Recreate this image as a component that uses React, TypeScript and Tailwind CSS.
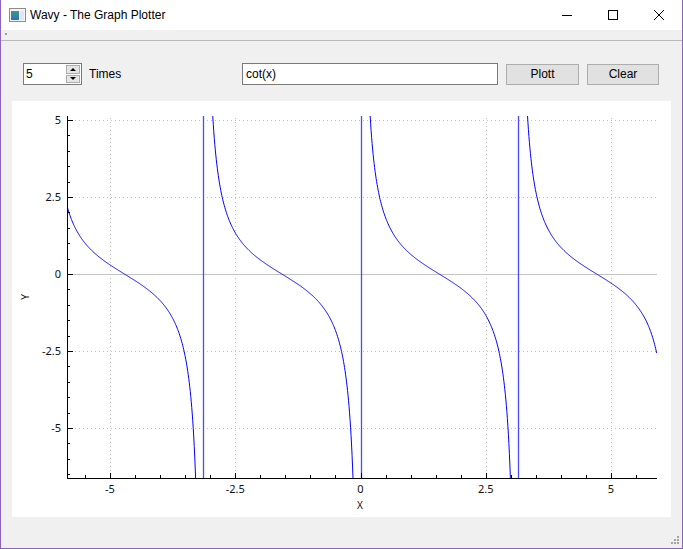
import React from "react";

const FONT = '"Noto Sans", "Liberation Sans", sans-serif';
const UI_FONT = '"Liberation Sans", "Noto Sans", sans-serif';

// plot panel geometry (panel-local px)
const PW = 659;
const PH = 416;
const AX_L = 55;
const AX_R = 645;
const AX_T = 15;
const AX_B = 377;
const X0 = 348.5;
const SX = 50.1;
const Y0 = 173;
const SY = 30.8;

const px = (x: number) => X0 + SX * x;
const py = (y: number) => Y0 - SY * y;

// split cot(x) into branches between the poles
function buildBranches() {
  const xmin = (AX_L - X0) / SX;
  const xmax = (AX_R - X0) / SX;
  const branches: string[][] = [[]];
  let prev: number | null = null;
  for (let x = xmin; x <= xmax + 1e-9; x += 0.01) {
    let v = Math.cos(x) / Math.sin(x);
    if (!isFinite(v)) v = 1e4;
    if (prev !== null && prev < -20 && v > 20) branches.push([]);
    prev = v;
    v = Math.max(-30, Math.min(30, v));
    branches[branches.length - 1].push(`${px(x).toFixed(2)},${py(v).toFixed(2)}`);
  }
  return branches.map((b) => b.join(" "));
}

function Plot() {
  const branches = React.useMemo(buildBranches, []);
  const poles = [-Math.PI, 0, Math.PI];
  const xMajors = [-5, -2.5, 0, 2.5, 5];
  const yMajors = [5, 2.5, 0, -2.5, -5];

  const xMinors: number[] = [];
  for (let v = -5.5; v <= 5.9; v += 0.5) xMinors.push(Math.round(v * 10) / 10);
  const yMinors: number[] = [];
  for (let v = -6.5; v <= 5; v += 0.5) yMinors.push(Math.round(v * 10) / 10);

  return (
    <svg width={PW} height={PH} viewBox={`0 0 ${PW} ${PH}`} className="block">
      <defs>
        <clipPath id="plotclip">
          <rect x={AX_L} y={AX_T} width={AX_R - AX_L} height={AX_B - AX_T} />
        </clipPath>
      </defs>

      {/* grid */}
      {xMajors.map((v) => (
        <line
          key={"gx" + v}
          x1={Math.round(px(v)) + 0.5}
          x2={Math.round(px(v)) + 0.5}
          y1={AX_T + 2}
          y2={AX_B}
          stroke="#c0c0c0"
          strokeWidth={1}
          strokeDasharray="1 3"
        />
      ))}
      {yMajors
        .filter((v) => v !== 0)
        .map((v) => (
          <line
            key={"gy" + v}
            x1={AX_L}
            x2={AX_R}
            y1={Math.round(py(v)) + 0.5}
            y2={Math.round(py(v)) + 0.5}
            stroke="#c0c0c0"
            strokeWidth={1}
            strokeDasharray="1 3"
          />
        ))}
      <line x1={AX_L} x2={AX_R} y1={py(0) + 0.5} y2={py(0) + 0.5} stroke="#c4c4c4" strokeWidth={1} />

      {/* curve */}
      <g clipPath="url(#plotclip)">
        {poles.map((p) => (
          <line
            key={"p" + p}
            x1={Math.round(px(p)) + 0.5}
            x2={Math.round(px(p)) + 0.5}
            y1={AX_T}
            y2={AX_B}
            stroke="#4a4aff"
            strokeWidth={1.3}
          />
        ))}
        {branches.map((b, i) => (
          <polyline key={i} points={b} fill="none" stroke="#0000ff" strokeWidth={1} />
        ))}
      </g>

      {/* axes */}
      <line x1={AX_L + 0.5} x2={AX_L + 0.5} y1={AX_T} y2={AX_B + 1} stroke="#000" strokeWidth={1} />
      <line x1={AX_L} x2={AX_R} y1={AX_B + 0.5} y2={AX_B + 0.5} stroke="#000" strokeWidth={1} />

      {/* y ticks */}
      {yMinors.map((v) => (
        <line
          key={"ym" + v}
          x1={AX_L}
          x2={AX_L + 3}
          y1={Math.round(py(v)) + 0.5}
          y2={Math.round(py(v)) + 0.5}
          stroke="#000"
          strokeWidth={1}
        />
      ))}
      {yMajors.map((v) => (
        <line
          key={"yM" + v}
          x1={AX_L}
          x2={AX_L + 6}
          y1={Math.round(py(v)) + 0.5}
          y2={Math.round(py(v)) + 0.5}
          stroke="#000"
          strokeWidth={1}
        />
      ))}

      {/* x ticks */}
      {xMinors.map((v) => (
        <line
          key={"xm" + v}
          x1={Math.round(px(v)) + 0.5}
          x2={Math.round(px(v)) + 0.5}
          y1={AX_B - 3}
          y2={AX_B}
          stroke="#000"
          strokeWidth={1}
        />
      ))}
      {xMajors.map((v) => (
        <line
          key={"xM" + v}
          x1={Math.round(px(v)) + 0.5}
          x2={Math.round(px(v)) + 0.5}
          y1={AX_B - 5}
          y2={AX_B}
          stroke="#000"
          strokeWidth={1}
        />
      ))}

      {/* labels */}
      <g fontFamily={FONT} fontSize={11} fill="#111">
        {yMajors.map((v) => (
          <text key={"yl" + v} x={AX_L - 6} y={py(v) + 4} textAnchor="end">
            {String(v)}
          </text>
        ))}
        {xMajors.map((v) => (
          <text key={"xl" + v} x={px(v)} y={AX_B + 15} textAnchor="middle">
            {String(v)}
          </text>
        ))}
        <text x={348} y={408} textAnchor="middle" fontSize={10}>
          X
        </text>
        <text x={17} y={196} textAnchor="middle" fontSize={10} transform="rotate(-90 17 196)">
          Y
        </text>
      </g>
    </svg>
  );
}

function AppIcon() {
  return (
    <svg width="17" height="14" viewBox="0 0 17 14">
      <defs>
        <linearGradient id="ig" x1="0" y1="0" x2="0" y2="1">
          <stop offset="0" stopColor="#3a9a8c" />
          <stop offset="1" stopColor="#2f6fb8" />
        </linearGradient>
      </defs>
      <rect x="0.5" y="0.5" width="16" height="13" fill="#f4f4f4" stroke="#8c8c8c" />
      <rect x="2" y="3" width="8" height="9" fill="url(#ig)" />
      <rect x="11" y="3" width="4" height="9" fill="#dfe6ee" />
    </svg>
  );
}

function TitleBar() {
  return (
    <div className="flex h-[30px] items-center bg-white">
      <div className="ml-[8px] mt-[-1px]">
        <AppIcon />
      </div>
      <span className="ml-[4px] text-[12px] text-black">Wavy - The Graph Plotter</span>
      <div className="ml-auto flex h-full">
        <div className="flex h-full w-[46px] items-center justify-center">
          <svg width="10" height="10" viewBox="0 0 10 10">
            <line x1="0" x2="10" y1="5.5" y2="5.5" stroke="#000" strokeWidth="1" />
          </svg>
        </div>
        <div className="flex h-full w-[46px] items-center justify-center">
          <svg width="10" height="10" viewBox="0 0 10 10">
            <rect x="0.5" y="0.5" width="9" height="9" fill="none" stroke="#000" strokeWidth="1" />
          </svg>
        </div>
        <div className="flex h-full w-[46px] items-center justify-center">
          <svg width="10" height="10" viewBox="0 0 10 10">
            <path d="M0 0 L10 10 M10 0 L0 10" stroke="#000" strokeWidth="1" />
          </svg>
        </div>
      </div>
    </div>
  );
}

function SpinBox() {
  return (
    <div className="flex h-[22px] w-[59px] border border-[#7a7a7a] bg-white">
      <span className="ml-[2px] flex-1 text-[12px] leading-[20px] text-black">5</span>
      <div className="my-[1px] mr-[1px] flex w-[14px] flex-col gap-[1px]">
        <div className="flex flex-1 items-center justify-center border border-[#adadad] bg-[#e5e5e5]">
          <svg width="6" height="3" viewBox="0 0 6 3">
            <path d="M0 3 L3 0 L6 3 Z" fill="#000" />
          </svg>
        </div>
        <div className="flex flex-1 items-center justify-center border border-[#adadad] bg-[#e5e5e5]">
          <svg width="6" height="3" viewBox="0 0 6 3">
            <path d="M0 0 L6 0 L3 3 Z" fill="#000" />
          </svg>
        </div>
      </div>
    </div>
  );
}

export default function App() {
  return (
    <div
      className="flex h-[549px] w-[683px] flex-col border-x border-b border-[#8a63bf] bg-[#f0f0f0]"
      style={{ fontFamily: UI_FONT }}
    >
      <TitleBar />
      <div className="relative h-[11px] border-b border-[#b9b9b9] bg-[#f0f0f0]">
        <div className="absolute left-[4px] top-[3px] h-[2px] w-[2px] bg-[#9a9a9a]" />
      </div>

      <div className="flex h-[60px] items-start pl-[22px] pt-[22px]">
        <div className="flex h-[22px] items-center">
          <SpinBox />
          <span className="ml-[7px] w-[153px] text-[12px] text-black">Times</span>
          <div className="flex h-[22px] w-[256px] items-center border border-[#7a7a7a] bg-white pl-[3px] text-[12px] text-black">
            cot(x)
          </div>
          <button className="ml-[8px] h-[21px] w-[73px] border border-[#adadad] bg-[#e1e1e1] text-[12px] text-black">
            Plott
          </button>
          <button className="ml-[8px] h-[21px] w-[72px] border border-[#adadad] bg-[#e1e1e1] text-[12px] text-black">
            Clear
          </button>
        </div>
      </div>

      <div className="mx-[11px] h-[416px] bg-white">
        <Plot />
      </div>

      <div className="flex flex-1 items-end justify-end pb-[2px] pr-[1px]">
        <svg width="10" height="10" viewBox="0 0 10 10">
          <rect x="6" y="0" width="2" height="2" fill="#a3a3a3" />
          <rect x="3" y="3" width="2" height="2" fill="#a3a3a3" />
          <rect x="6" y="3" width="2" height="2" fill="#a3a3a3" />
          <rect x="0" y="6" width="2" height="2" fill="#a3a3a3" />
          <rect x="3" y="6" width="2" height="2" fill="#a3a3a3" />
          <rect x="6" y="6" width="2" height="2" fill="#a3a3a3" />
        </svg>
      </div>
    </div>
  );
}
